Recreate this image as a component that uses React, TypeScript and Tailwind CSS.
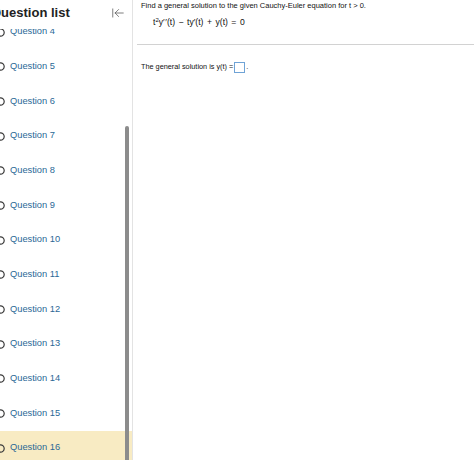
import { ArrowLeftToLine } from 'lucide-react';

const questions = [4, 5, 6, 7, 8, 9, 10, 11, 12, 13, 14, 15, 16];

function Circle() {
  return (
    <svg width="9" height="9" viewBox="0 0 9 9" className="shrink-0">
      <circle cx="4.5" cy="4.5" r="3.7" fill="none" stroke="#3b3b3b" strokeWidth="1.2" />
    </svg>
  );
}

export default function App() {
  return (
    <div className="flex h-[460px] w-[474px] overflow-hidden bg-white font-['Liberation_Sans',Arial,sans-serif]">
      {/* Sidebar */}
      <aside className="relative flex w-[133px] shrink-0 flex-col border-r border-[#e3e3e3]">
        <div className="relative z-10 flex h-[29px] shrink-0 items-start justify-between bg-white pr-[7px] pt-[4px]">
          <span className="ml-[-9px] text-[13px] font-bold leading-[18px] text-[#222]">Question list</span>
          <ArrowLeftToLine size={14} strokeWidth={1.3} className="mt-[2px] text-[#555]" />
        </div>
        <div className="flex-1 overflow-hidden">
          <div className="mt-[-14px] flex flex-col">
            {questions.map((q) => (
              <div
                key={q}
                className={
                  'flex h-[34.67px] items-center gap-[5px] ' +
                  (q === 16 ? 'bg-[#f8ebc3]' : '')
                }
              >
                <div className="ml-[-4px]">
                  <Circle />
                </div>
                <span className="text-[9.3px] text-[#2a6896]">Question {q}</span>
              </div>
            ))}
          </div>
        </div>
        {/* overlay scrollbar thumb */}
        <div className="absolute right-[3px] top-[126px] bottom-0 w-[4px] rounded-t-[2px] bg-[#8c8c8c]" />
      </aside>

      {/* Main */}
      <main className="flex flex-1 flex-col">
        <div className="pl-[8px] pt-[1px]">
          <p className="text-[7.5px] leading-[10px] text-[#111]">
            Find a general solution to the given Cauchy-Euler equation for t &gt; 0.
          </p>
          <p className="mt-[6px] pl-[12px] text-[8.6px] leading-[11px] text-[#111] [word-spacing:1.1px]">
            t<sup className="text-[6px]">2</sup>y′&#8202;′(t) − ty′(t) + y(t) = 0
          </p>
        </div>
        <div className="ml-[4px] mt-[16px] h-px bg-[#d2d2d2]" />
        <div className="mt-[17px] flex items-center pl-[8px] text-[7.3px] text-[#111]">
          <span>The general solution is y(t) =</span>
          <span className="ml-[1px] inline-block h-[11px] w-[11px] border border-[#6fa3d6] bg-white" />
          <span className="ml-[1px]">.</span>
        </div>
      </main>
    </div>
  );
}
